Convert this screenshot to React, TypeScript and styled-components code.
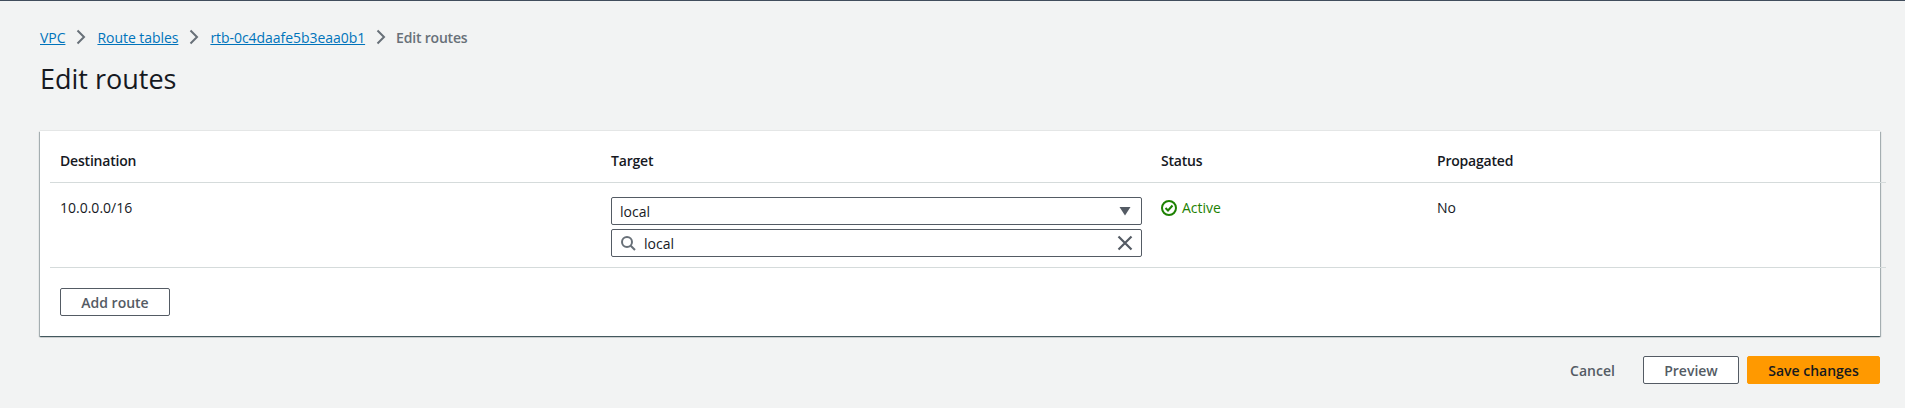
import React from "react";
import styled, { createGlobalStyle } from "styled-components";

const GlobalStyle = createGlobalStyle`
  html, body {
    margin: 0;
    padding: 0;
    background: #f2f3f3;
    font-family: "Open Sans", "Liberation Sans", sans-serif;
    font-size: 14px;
    color: #16191f;
  }
`;

const Page = styled.div`
  height: 408px;
  box-sizing: border-box;
  border-top: 1px solid #414d5c;
  padding: 26px 25px 0 40px;
  overflow: hidden;
`;

const Breadcrumbs = styled.nav`
  display: flex;
  align-items: center;
  height: 20px;
  gap: 8px;
  font-size: 14px;
`;

const Crumb = styled.a`
  color: #0073bb;
  text-decoration: underline;
  letter-spacing: -0.05px;
`;

const CurrentCrumb = styled.span`
  color: #687078;
  font-weight: 600;
  letter-spacing: -0.2px;
  margin-left: -1px;
`;

const Title = styled.h1`
  margin: 14px 0 0;
  font-size: 27px;
  line-height: 36px;
  font-weight: 400;
`;

const Card = styled.section`
  margin-top: 34px;
  height: 205px;
  box-sizing: border-box;
  background: #fff;
  box-shadow: 0 1px 1px 0 rgba(0, 28, 36, 0.5), 1px 1px 1px 0 rgba(0, 28, 36, 0.25),
    -1px 1px 1px 0 rgba(0, 28, 36, 0.25), 0 -1px 0 0 #e4e6e6;
  padding: 0 10px;
`;

// the dividers run a little past the card's right edge, as in the original
const Row = styled.div<{ $height: number }>`
  display: grid;
  grid-template-columns: 551px 550px 276px 1fr;
  height: ${(p) => p.$height}px;
  margin-right: -16px;
  box-sizing: border-box;
  border-bottom: 1px solid #d5dbdb;
`;

const HeadCell = styled.div`
  padding: 20px 10px 0;
  font-weight: 600;
  letter-spacing: -0.2px;
  line-height: 20px;
`;

const Cell = styled.div`
  padding: 15px 10px 0;
  line-height: 20px;
`;

const TargetCell = styled.div`
  padding: 14px 9px 0 10px;
  display: flex;
  flex-direction: column;
  gap: 4px;
`;

const Field = styled.div`
  height: 28px;
  box-sizing: border-box;
  border: 1px solid #545b64;
  border-radius: 2px;
  display: flex;
  align-items: center;
  padding: 0 8px;
  gap: 8px;
`;

const FieldText = styled.span`
  flex: 1;
`;

const Status = styled.div`
  display: flex;
  align-items: center;
  gap: 5px;
  color: #1d8102;
`;

const Footer = styled.div`
  padding: 20px 10px;
`;

const Button = styled.button<{ $primary?: boolean; $plain?: boolean; $width: number }>`
  width: ${(p) => p.$width}px;
  height: 28px;
  box-sizing: border-box;
  padding: 0;
  border-radius: 2px;
  font-family: inherit;
  font-size: 14px;
  font-weight: 600;
  border: 1px solid ${(p) => (p.$primary ? "#ff9900" : p.$plain ? "transparent" : "#545b64")};
  background: ${(p) => (p.$primary ? "#ff9900" : p.$plain ? "transparent" : "#fff")};
  color: ${(p) => (p.$primary ? "#16191f" : "#545b64")};
`;

const Actions = styled.div`
  margin-top: 20px;
  display: flex;
  justify-content: flex-end;
  gap: 8px;
`;

const SeparatorIcon = () => (
  <svg width="16" height="16" viewBox="0 0 16 16" fill="none" stroke="#687078" strokeWidth="2">
    <path d="M4.5 1.5 11 8l-6.5 6.5" />
  </svg>
);

const SearchIcon = () => (
  <svg width="16" height="16" viewBox="0 0 16 16" fill="none" stroke="#687078" strokeWidth="2">
    <circle cx="7" cy="7" r="5" />
    <path d="M10.7 10.7 15 15" />
  </svg>
);

const ClearIcon = () => (
  <svg width="16" height="16" viewBox="0 0 16 16" fill="none" stroke="#545b64" strokeWidth="2.2">
    <path d="M1.5 1.5l13 13M14.5 1.5l-13 13" />
  </svg>
);

const CaretIcon = () => (
  <svg width="16" height="16" viewBox="0 0 16 16" fill="#545b64">
    <path d="M2.5 4h11L8 12.5z" />
  </svg>
);

const ActiveIcon = () => (
  <svg width="16" height="16" viewBox="0 0 16 16" fill="none" stroke="#1d8102" strokeWidth="2">
    <circle cx="8" cy="8" r="7" />
    <path d="M4.5 8l2.5 2.5L11.5 5.5" />
  </svg>
);

const App = () => (
  <>
    <GlobalStyle />
    <Page>
      <Breadcrumbs>
        <Crumb>VPC</Crumb>
        <SeparatorIcon />
        <Crumb>Route tables</Crumb>
        <SeparatorIcon />
        <Crumb>rtb-0c4daafe5b3eaa0b1</Crumb>
        <SeparatorIcon />
        <CurrentCrumb>Edit routes</CurrentCrumb>
      </Breadcrumbs>
      <Title>Edit routes</Title>
      <Card>
        <Row $height={52}>
          <HeadCell>Destination</HeadCell>
          <HeadCell>Target</HeadCell>
          <HeadCell>Status</HeadCell>
          <HeadCell>Propagated</HeadCell>
        </Row>
        <Row $height={85}>
          <Cell>10.0.0.0/16</Cell>
          <TargetCell>
            <Field>
              <FieldText>local</FieldText>
              <CaretIcon />
            </Field>
            <Field>
              <SearchIcon />
              <FieldText>local</FieldText>
              <ClearIcon />
            </Field>
          </TargetCell>
          <Cell>
            <Status>
              <ActiveIcon />
              Active
            </Status>
          </Cell>
          <Cell>No</Cell>
        </Row>
        <Footer>
          <Button $width={110}>Add route</Button>
        </Footer>
      </Card>
      <Actions>
        <Button $plain $width={85}>Cancel</Button>
        <Button $width={96}>Preview</Button>
        <Button $primary $width={133}>Save changes</Button>
      </Actions>
    </Page>
  </>
);

export default App;
